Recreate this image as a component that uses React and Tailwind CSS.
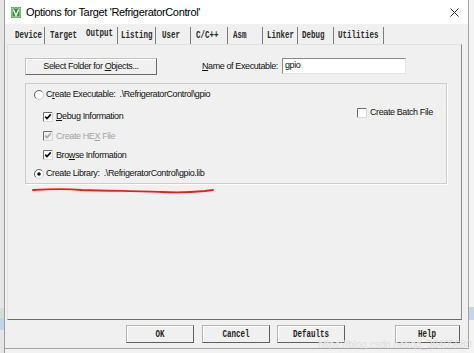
import React from 'react';

const tabs = [
  { name: 'Device', w: 36, pl: 6 },
  { name: 'Target', w: 37, pl: 5, noSep: true },
  { name: 'Output', w: 36, pl: 4, active: true },
  { name: 'Listing', w: 38, pl: 3 },
  { name: 'User', w: 35, pl: 6 },
  { name: 'C/C++', w: 37, pl: 5 },
  { name: 'Asm', w: 35, pl: 5 },
  { name: 'Linker', w: 35, pl: 4 },
  { name: 'Debug', w: 36, pl: 4 },
  { name: 'Utilities', w: 50, pl: 4 },
];

const CheckBox = ({ checked, disabled }) => (
  <svg width="10" height="10" viewBox="0 0 10 10" className="shrink-0">
    <rect x="0" y="0" width="10" height="10" fill={disabled ? '#f0f0f0' : '#ffffff'} />
    <path d="M0.5 9.5 V0.5 H9.5" stroke="#6f6f6f" fill="none" />
    <path d="M9.5 0.5 V9.5 H0.5" stroke="#d8d8d8" fill="none" />
    {checked && (
      <path d="M2.2 4.6 L4 6.6 L7.8 2.4" stroke={disabled ? '#a8a8a8' : '#111'} strokeWidth="1.7" fill="none" />
    )}
  </svg>
);

const Radio = ({ checked }) => (
  <svg width="10" height="10" viewBox="0 0 10 10" className="shrink-0">
    <circle cx="5" cy="5" r="4.5" fill="#fff" stroke="#d0d0d0" />
    <path d="M1.8 8.2 A4.5 4.5 0 0 1 8.2 1.8" stroke="#666" fill="none" />
    {checked && <circle cx="5" cy="5" r="1.8" fill="#111" />}
  </svg>
);

const DlgButton = ({ children, w }) => (
  <button
    className="h-[18px] flex items-center justify-center bg-[#f0f0f0] border border-[#b4b4b4] border-r-[#5e5e5e] border-b-[#5e5e5e] shadow-[inset_1px_1px_0_#ffffff] text-[#222]"
    style={{ width: w }}
  >
    <span className="inline-block font-['Liberation_Mono',monospace] font-bold text-[10px] scale-x-75">{children}</span>
  </button>
);

export default function App() {
  return (
    <div className="relative w-[474px] h-[353px] overflow-hidden bg-[#f2f2f2] flex font-['Liberation_Sans',Arial,sans-serif] text-[#111]">
      {/* background app, left */}
      <div className="w-[5px] h-full flex flex-col bg-[#e6e6e6] border-r border-[#9c9c9c]">
        <div className="h-[308px]" />
        <div className="h-[10px] bg-[#cfe0d0]" />
        <div className="h-[12px] bg-[#c3d4ea]" />
      </div>

      {/* dialog window */}
      <div className="w-[464px] h-[349px] flex flex-col bg-[#f0f0f0] border-r border-b border-[#a2a2a2]">
        {/* title bar */}
        <div className="h-[24px] bg-white flex items-center pl-[6px] pr-[9px]">
          <svg width="10" height="11" viewBox="0 0 10 11" className="shrink-0">
            <rect x="0" y="0" width="10" height="11" fill="#2f8f3e" />
            <rect x="1" y="1" width="8" height="9" fill="none" stroke="#e9f5e0" strokeWidth="0.8" />
            <path d="M2.3 2.5 L5 8.5 L7.7 2.5" stroke="#f4f8d8" strokeWidth="1.4" fill="none" />
          </svg>
          <span className="ml-[5px] text-[11px] tracking-[-0.35px] leading-none text-black">Options for Target 'RefrigeratorControl'</span>
          <svg width="9" height="9" viewBox="0 0 9 9" className="ml-auto">
            <path d="M0.5 0.5 L8.5 8.5 M8.5 0.5 L0.5 8.5" stroke="#333" strokeWidth="1" />
          </svg>
        </div>

        {/* tabs */}
        <div className="mt-[3px] h-[17px] ml-[4px] flex">
          {tabs.map((t) => (
            <div
              key={t.name}
              className={`h-full flex items-center ${t.noSep ? '' : 'border-r border-[#7c7c7c]'} ${t.active ? 'pb-[5px]' : 'pb-[1px]'}`}
              style={{ width: t.w, paddingLeft: t.pl }}
            >
              <span className="inline-block origin-left font-['Liberation_Mono',monospace] font-bold text-[10px] text-[#2a2a2a] scale-x-75 whitespace-nowrap">
                {t.name}
              </span>
            </div>
          ))}
        </div>

        {/* panel */}
        <div className="ml-[2px] w-[455px] h-[276px] border border-[#e2e2e2] border-r-[#8a8a8a] border-b-[#6a6a6a] flex flex-col text-[9px] tracking-[-0.4px]">
          <div className="mt-[13px] ml-[17px] h-[17px] flex items-center">
            <button className="w-[132px] h-[17px] flex items-center justify-center bg-[#f0f0f0] border border-[#c2c2c2] border-r-[#6a6a6a] border-b-[#6a6a6a] shadow-[inset_1px_1px_0_#ffffff] whitespace-pre">
              {'Select Folder for '}<u className="underline-offset-1">O</u>{'bjects...'}
            </button>
            <span className="ml-[45px] whitespace-nowrap">
              <u className="underline-offset-1">N</u>ame of Executable:
            </span>
            <div className="ml-[4px] -mt-[1px] w-[124px] h-[16px] bg-white border border-[#8a8a8a] border-r-[#e4e4e4] border-b-[#e4e4e4] flex items-center pl-[2px]">
              gpio
            </div>
          </div>

          {/* group box */}
          <div className="mt-[8px] ml-[17px] w-[422px] h-[101px] border border-[#cdcdcd] shadow-[1px_1px_0_#ffffff] flex">
            <div className="flex-1 flex flex-col pl-[8px] whitespace-nowrap">
              <div className="h-[22px] flex items-center">
                <Radio />
                <span className="ml-[2px]">C<u className="underline-offset-1">r</u>eate Executable:&nbsp;&nbsp;.\RefrigeratorControl\gpio</span>
              </div>
              <div className="h-[22px] flex items-center pl-[9px]">
                <CheckBox checked />
                <span className="ml-[3px]"><u className="underline-offset-1">D</u>ebug Information</span>
              </div>
              <div className="h-[18px] flex items-center pl-[9px] text-[#a3a3a3]">
                <CheckBox checked disabled />
                <span className="ml-[3px]">Create HE<u className="underline-offset-1">X</u> File</span>
              </div>
              <div className="h-[20px] flex items-center pl-[9px]">
                <CheckBox checked />
                <span className="ml-[3px]">Bro<u className="underline-offset-1">w</u>se Information</span>
              </div>
              <div className="h-[18px] flex items-center">
                <Radio checked />
                <span className="ml-[2px]">Create Library:&nbsp;&nbsp;.\RefrigeratorControl\gpio.lib</span>
              </div>
            </div>
            <div className="w-[89px] pt-[22px] whitespace-nowrap">
              <div className="h-[14px] flex items-center">
                <CheckBox />
                <span className="ml-[3px]">Create Batch File</span>
              </div>
            </div>
          </div>
        </div>

        {/* buttons */}
        <div className="mt-[5px] ml-[121px] flex">
          <DlgButton w={68}>OK</DlgButton>
          <div className="w-[8px]" />
          <DlgButton w={68}>Cancel</DlgButton>
          <div className="w-[7px]" />
          <DlgButton w={68}>Defaults</DlgButton>
          <div className="w-[50px]" />
          <DlgButton w={65}>Help</DlgButton>
        </div>
      </div>

      {/* background app, right */}
      <div className="w-[5px] h-full flex flex-col bg-[#f4f4f4]">
        <div className="h-[307px]" />
        <div className="h-[13px] bg-[#c5d5ea]" />
      </div>

      {/* hand-drawn red underline */}
      <svg className="absolute left-0 top-0 pointer-events-none" width="474" height="353" viewBox="0 0 474 353">
        <path
          d="M33 190 C 50 189, 70 189, 82 190 C 110 191, 140 191, 162 192 C 180 193, 195 192, 205 191 L 213 190"
          stroke="#e8201c"
          strokeWidth="1.8"
          fill="none"
          strokeLinecap="round"
        />
      </svg>

      {/* watermark */}
      <span className="absolute left-[318px] top-[337px] text-[10px] text-[#dedede] font-['Liberation_Sans',sans-serif] pointer-events-none whitespace-nowrap">
        https://blog.csdn.net/qq_38405680
      </span>
    </div>
  );
}
